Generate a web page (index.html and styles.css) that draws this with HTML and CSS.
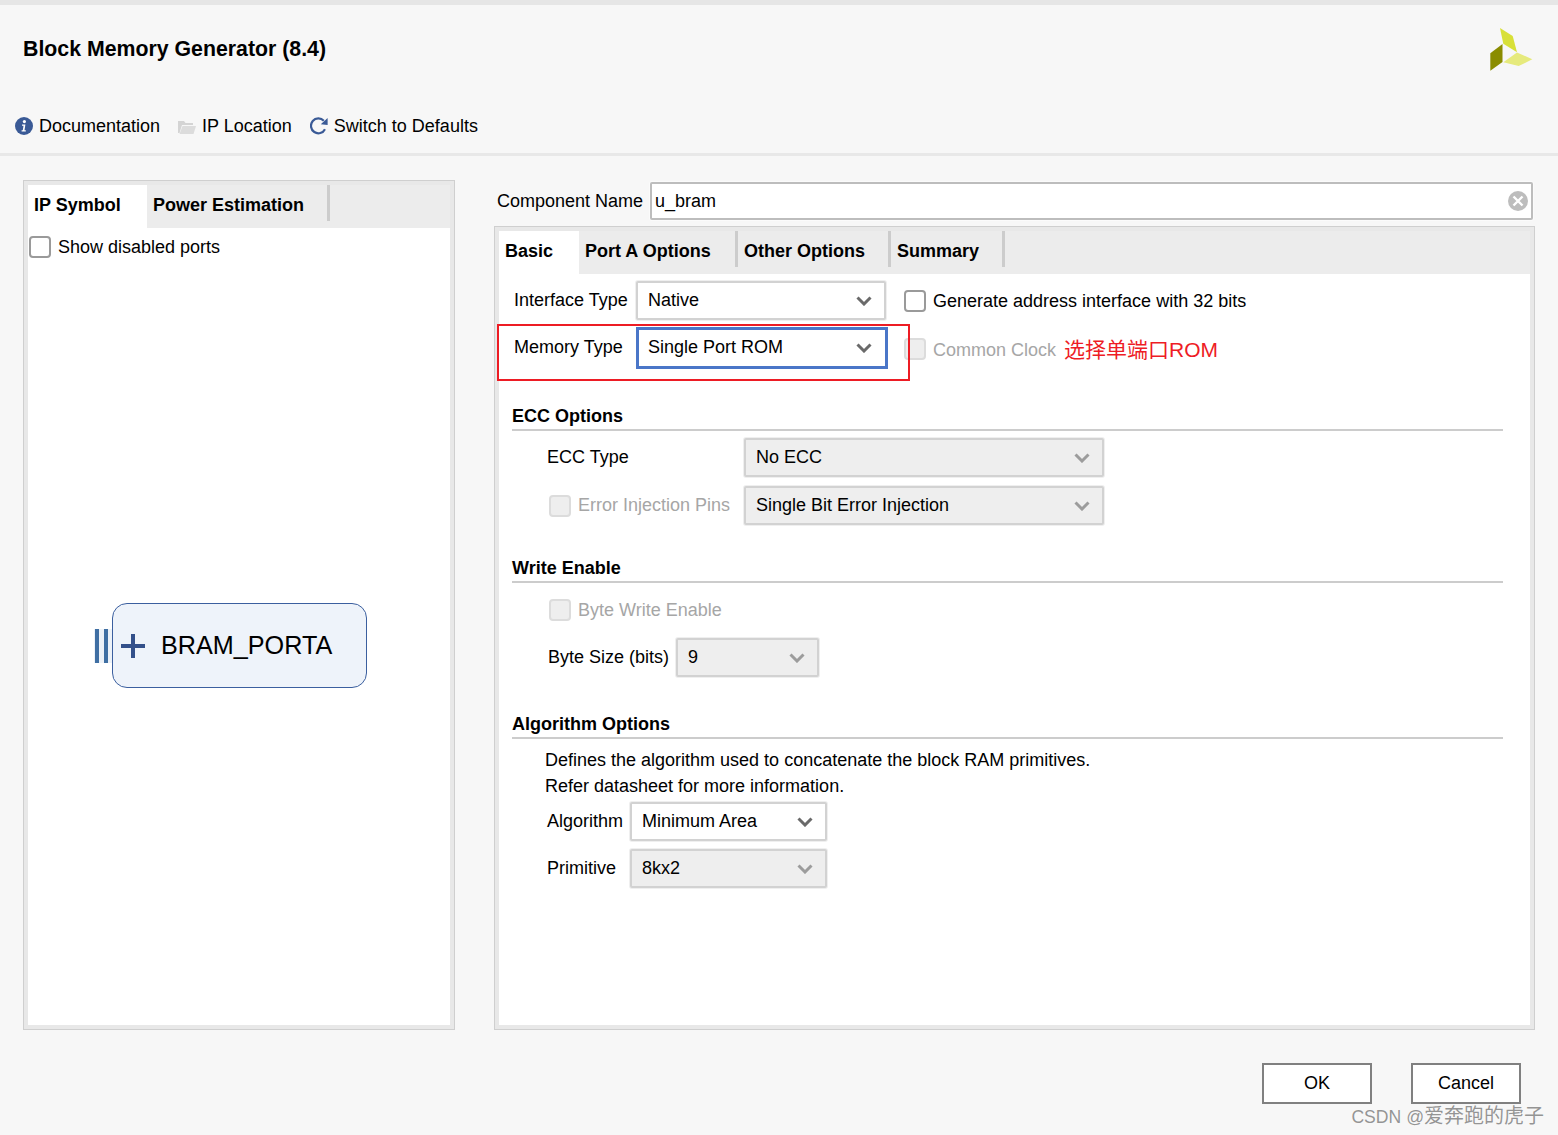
FILE: index.html
```html
<!DOCTYPE html>
<html lang="en">
<head>
<meta charset="utf-8">
<title>Block Memory Generator</title>
<link rel="stylesheet" href="styles.css">
</head>
<body>
<div class="page">
  <header class="header">
    <div class="title-row">
      <h1 class="title">Block Memory Generator (8.4)</h1>
      <svg class="logo" width="44" height="44" viewBox="1490 28 44 44" aria-hidden="true">
        <polygon points="1500,28 1512.7,36 1517,52.3 1503.3,43.7" fill="#d8e038"/>
        <polygon points="1517,52.5 1532.3,59.3 1518.7,66 1503.3,62.3" fill="#e6ea7c"/>
        <polygon points="1502.5,44 1502.5,62 1490.3,70.7 1490.3,53.3" fill="#8a8c00"/>
      </svg>
    </div>
    <div class="toolbar">
      <span class="tool">
        <svg class="tool-icon" width="18" height="18" viewBox="0 0 18 18" aria-hidden="true"><circle cx="9" cy="9" r="9" fill="#3a5a96"/><circle cx="9.4" cy="4.6" r="1.6" fill="#fff"/><path d="M7 7.6h3.400l-.9 5.600h1.300v1.200H6.600v-1.200h1.200l.7-4.400H7z" fill="#fff"/></svg>
        Documentation
      </span>
      <span class="tool tool-b">
        <svg class="tool-icon" width="18" height="17" viewBox="0 0 18 17" aria-hidden="true"><path d="M0 3h6l1.500 2H15v2H4L1.500 15H0z" fill="#d4d4d4"/><path d="M4.500 8H18l-2.500 8H1.500z" fill="#dcdcdc"/></svg>
        IP Location
      </span>
      <span class="tool tool-b">
        <svg class="tool-icon" width="18" height="18" viewBox="0 0 18 18" aria-hidden="true"><path d="M15 12.200A7.400 7.400 0 1 1 13.800 3.800" fill="none" stroke="#3a5a96" stroke-width="2.200"/><polygon points="17.600,1 17.600,8 10.800,7.200" fill="#3a5a96"/></svg>
        Switch to Defaults
      </span>
    </div>
  </header>

  <main class="main">
    <section class="panel left-panel">
      <div class="tabs">
        <span class="tab tab-active tab-ip">IP Symbol</span>
        <span class="tab tab-power">Power Estimation</span>
      </div>
      <div class="left-body">
        <label class="check-row">
          <span class="box"></span>
          <span>Show disabled ports</span>
        </label>
        <div class="symbol">
          <span class="bars"></span>
          <div class="symbol-box">
            <span class="plus"></span>
            <span class="symbol-name">BRAM_PORTA</span>
          </div>
        </div>
      </div>
    </section>

    <section class="right-col">
      <div class="name-row">
        <span class="name-label">Component Name</span>
        <div class="name-input">
          <span>u_bram</span>
          <svg width="20" height="20" viewBox="0 0 20 20" aria-hidden="true"><circle cx="10" cy="10" r="10" fill="#bdbdbd"/><path d="M5.500 5.500l9 9M14.500 5.500l-9 9" stroke="#fff" stroke-width="2.400"/></svg>
        </div>
      </div>

      <div class="panel right-panel">
        <div class="tabs">
          <span class="tab tab-active tab-basic">Basic</span>
          <span class="tab tab-porta">Port A Options</span>
          <span class="tab tab-other">Other Options</span>
          <span class="tab tab-summary">Summary</span>
        </div>

        <div class="form">
          <div class="row row-interface">
            <span class="lbl lbl-top">Interface Type</span>
            <div class="select sel-interface"><span>Native</span><svg class="chev" width="16" height="10" viewBox="0 0 16 10" aria-hidden="true"><path d="M1.500 1.500L8 8l6.500-6.500" /></svg></div>
            <span class="box box-gen"></span>
            <span class="gen-text">Generate address interface with 32 bits</span>
          </div>

          <div class="row row-memory">
            <span class="red-box"></span>
            <span class="lbl lbl-mem">Memory Type</span>
            <div class="select sel-memory"><span>Single Port ROM</span><svg class="chev" width="16" height="10" viewBox="0 0 16 10" aria-hidden="true"><path d="M1.500 1.500L8 8l6.500-6.500" /></svg></div>
            <span class="box box-off box-clock"></span>
            <span class="off-text clock-text">Common Clock</span>
            <span class="note">选择单端口ROM</span>
          </div>

          <div class="section sec-ecc">
            <h2 class="sec-title">ECC Options</h2>
            <div class="row row-ecc1">
              <span class="lbl lbl-ecc">ECC Type</span>
              <div class="select select-off sel-ecc"><span>No ECC</span><svg class="chev" width="16" height="10" viewBox="0 0 16 10" aria-hidden="true"><path d="M1.500 1.500L8 8l6.500-6.500" /></svg></div>
            </div>
            <div class="row row-ecc2">
              <span class="box box-off box-inj"></span>
              <span class="off-text lbl-inj">Error Injection Pins</span>
              <div class="select select-off sel-ecc"><span>Single Bit Error Injection</span><svg class="chev" width="16" height="10" viewBox="0 0 16 10" aria-hidden="true"><path d="M1.500 1.500L8 8l6.500-6.500" /></svg></div>
            </div>
          </div>

          <div class="section sec-write">
            <h2 class="sec-title">Write Enable</h2>
            <div class="row row-bwe">
              <span class="box box-off box-inj"></span>
              <span class="off-text">Byte Write Enable</span>
            </div>
            <div class="row row-bsize">
              <span class="lbl lbl-bsize">Byte Size (bits)</span>
              <div class="select select-off sel-bsize"><span>9</span><svg class="chev" width="16" height="10" viewBox="0 0 16 10" aria-hidden="true"><path d="M1.500 1.500L8 8l6.500-6.500" /></svg></div>
            </div>
          </div>

          <div class="section sec-algo">
            <h2 class="sec-title">Algorithm Options</h2>
            <p class="desc">Defines the algorithm used to concatenate the block RAM primitives.<br>Refer datasheet for more information.</p>
            <div class="row row-algo1">
              <span class="lbl lbl-algo">Algorithm</span>
              <div class="select sel-algo"><span>Minimum Area</span><svg class="chev" width="16" height="10" viewBox="0 0 16 10" aria-hidden="true"><path d="M1.500 1.500L8 8l6.500-6.500" /></svg></div>
            </div>
            <div class="row row-algo2">
              <span class="lbl lbl-algo">Primitive</span>
              <div class="select select-off sel-algo"><span>8kx2</span><svg class="chev" width="16" height="10" viewBox="0 0 16 10" aria-hidden="true"><path d="M1.500 1.500L8 8l6.500-6.500" /></svg></div>
            </div>
          </div>
        </div>
      </div>
    </section>
  </main>

  <footer class="footer">
    <button class="btn">OK</button>
    <button class="btn">Cancel</button>
    <span class="watermark"><span class="wm-latin">CSDN @</span>爱奔跑的虎子</span>
  </footer>
</div>
</body>
</html>
```
FILE: styles.css
```css
* { box-sizing: border-box; }
html, body { margin: 0; padding: 0; }
body {
  background: #f7f7f7;
  color: #000;
  font-family: "Liberation Sans", "Noto Sans CJK SC", sans-serif;
  font-size: 18px;
}
.page {
  position: relative;
  height: 1135px;
  overflow: hidden;
  border-top: 5px solid #e6e6e6;
}

/* header */
.header {
  height: 151px;
  border-bottom: 3px solid #e8e8e8;
}
.title-row {
  display: flex;
  justify-content: space-between;
  height: 92px;
  padding: 23px 24px 0 23px;
}
.title {
  margin: 0;
  font-size: 21.3px;
  line-height: 42px;
  height: 42px;
  font-weight: 700;
}
.logo { display: block; }
.toolbar {
  display: flex;
  align-items: center;
  height: 26px;
  margin-top: 16px;
  padding-left: 15px;
}
.tool { display: flex; align-items: center; gap: 6px; white-space: nowrap; }
.tool-b { margin-left: 18px; }
.tool-icon { display: block; flex: none; }

/* main */
.main {
  display: flex;
  align-items: flex-start;
  gap: 39px;
  padding: 24px 0 0 23px;
}
.panel {
  border: 1px solid #cfcfcf;
  background: #fff;
  box-shadow: inset 0 0 0 4px #e8e8e8;
  padding: 4px;
}
.left-panel { width: 432px; height: 850px; }
.tabs {
  display: flex;
  height: 43px;
  background: #ececec;
  font-weight: 700;
  font-size: 18px;
}
.tab {
  display: flex;
  align-items: center;
  height: 43px;
  padding-bottom: 2px;
  white-space: nowrap;
}
.tab-active { background: #fff; }
.tab-ip { width: 119px; padding-left: 6px; }
.tab-power { width: 183px; padding-left: 6px; }
.tab-power, .tab-porta, .tab-other, .tab-summary { position: relative; }
.tab-power::after, .tab-porta::after, .tab-other::after, .tab-summary::after {
  content: "";
  position: absolute;
  right: 0;
  top: 0;
  width: 3px;
  height: 36px;
  background: #cccccc;
}
.tab-basic { width: 80px; padding-left: 6px; }
.tab-porta { width: 159px; padding-left: 6px; }
.tab-other { width: 153px; padding-left: 6px; }
.tab-summary { width: 114px; padding-left: 6px; }

.left-body { padding: 8px 0 0 1px; }
.check-row { display: flex; align-items: center; gap: 7px; height: 22px; }
.box {
  display: block;
  flex: none;
  width: 22px;
  height: 22px;
  border: 2px solid #9a9a9a;
  border-radius: 4px;
  background: #fff;
}
.box-off { border-color: #dcdcdc; background: #eeeeee; }

.symbol {
  display: flex;
  align-items: center;
  margin: 345px 0 0 65px;
}
.bars {
  width: 18px;
  height: 34px;
  background: linear-gradient(90deg, #edf2f8 0 1px, #3f6fa3 1px 5px, #edf2f8 5px 10px, #3f6fa3 10px 14px, #edf2f8 14px);
}
.symbol-box {
  display: flex;
  align-items: center;
  width: 255px;
  height: 85px;
  padding-left: 8px;
  border: 1px solid #3b5f9f;
  border-radius: 15px;
  background: #eef3fa;
}
.plus {
  width: 24px;
  height: 24px;
  background: linear-gradient(#33508a, #33508a) center / 100% 4px no-repeat,
              linear-gradient(#33508a, #33508a) center / 4px 100% no-repeat;
}
.symbol-name { margin-left: 16px; padding-bottom: 2px; font-size: 25.2px; line-height: 30px; }

/* right */
.right-col { width: 1041px; }
.name-row { display: flex; align-items: center; height: 38px; margin-top: 2px; padding-left: 3px; }
.name-label { width: 153px; white-space: nowrap; }
.name-input {
  display: flex;
  align-items: center;
  justify-content: space-between;
  width: 883px;
  height: 38px;
  padding: 0 3px 0 3px;
  border: 2px solid #bdbdbd;
  border-radius: 2px;
  background: #fff;
  box-shadow: 0 0 0 1px #fbfbfb;
}
.right-panel { width: 1041px; height: 804px; margin-top: 6px; }
.form { position: relative; }
.row { display: flex; align-items: center; white-space: nowrap; }
.lbl { display: block; }
.select {
  display: flex;
  align-items: center;
  justify-content: space-between;
  height: 39px;
  padding: 0 12px 0 10px;
  border: 2px solid #d2d2d2;
  border-radius: 2px;
  background: #fff;
  box-shadow: 0 0 0 1px #efefef;
}
.select-off { background: #eeeeee; }
.chev { display: block; flex: none; fill: none; stroke: #6a6a6a; stroke-width: 3; }
.select-off .chev { stroke: #9c9c9c; }

.row-interface { height: 39px; margin-top: 7px; padding-left: 15px; }
.lbl-top { width: 122px; }
.sel-interface { width: 250px; }
.box-gen { margin: 0 7px 0 18px; }
.gen-text { padding-top: 2px; }

.row-memory { position: relative; height: 42px; margin-top: 7px; padding-left: 15px; }
.lbl-mem { width: 122px; padding-bottom: 1px; }
.sel-memory { width: 252px; height: 42px; border: 3px solid #4a76c8; border-radius: 0; padding: 0 13px 1px 9px; box-shadow: none; }
.red-box {
  position: absolute;
  left: -2px;
  top: -3px;
  width: 413px;
  height: 57px;
  border: 2px solid #ed1c24;
}
.box-clock { margin: 2px 7px 0 16px; }
.clock-text { padding-top: 4px; }
.off-text { color: #a6a6a6; }
.note { margin-left: 8px; font-size: 21px; color: #ee1c25; }

.section { width: 991px; margin-left: 13px; }
.sec-title {
  margin: 0;
  height: 28px;
  font-size: 18px;
  line-height: 26px;
  font-weight: 700;
  border-bottom: 2px solid #cccccc;
}
.sec-ecc { margin-top: 34px; }
.row-ecc1 { margin-top: 7px; padding-left: 35px; }
.lbl-ecc { width: 197px; }
.sel-ecc { width: 360px; }
.row-ecc2 { margin-top: 9px; padding-left: 37px; }
.box-inj { margin-right: 7px; }
.lbl-inj { width: 166px; }

.sec-write { margin-top: 30px; }
.row-bwe { height: 24px; margin-top: 15px; padding-left: 37px; }
.row-bsize { margin-top: 16px; padding-left: 36px; }
.lbl-bsize { width: 128px; }
.sel-bsize { width: 143px; }

.sec-algo { margin-top: 34px; }
.desc { margin: 8px 0 0 33px; line-height: 26px; }
.row-algo1 { margin-top: 3px; padding-left: 35px; }
.row-algo2 { margin-top: 8px; padding-left: 35px; }
.lbl-algo { width: 83px; }
.sel-algo { width: 197px; }

/* footer */
.footer {
  display: flex;
  justify-content: flex-end;
  gap: 39px;
  margin-top: 33px;
  padding-right: 37px;
}
.btn {
  width: 110px;
  height: 41px;
  padding: 0;
  border: 2px solid #808080;
  border-radius: 0;
  background: #fff;
  color: #000;
  font: inherit;
}
.watermark {
  position: absolute;
  right: 14px;
  bottom: 6px;
  font-size: 20px;
  color: rgba(110, 110, 110, 0.72);
  white-space: nowrap;
}
.wm-latin { font-size: 17.6px; }
```
